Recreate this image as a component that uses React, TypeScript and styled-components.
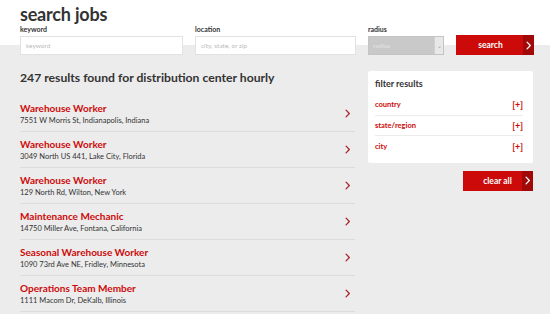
import React from "react";
import styled, { createGlobalStyle } from "styled-components";

const Global = createGlobalStyle`
  html, body { margin: 0; padding: 0; }
  body { background: #ececec; font-family: Lato, "Liberation Sans", sans-serif; color: #333; }
  * { box-sizing: border-box; }
`;

const RED = "#cc0a0a";
const DARK = "#a10808";

const Top = styled.header`
  background: linear-gradient(#ffffff 45px, #ececec 45px);
  padding: 3px 17px 0 20px;
`;

const Title = styled.h1`
  margin: 0;
  font-size: 18px;
  line-height: 22px;
  font-weight: 700;
  color: #333;
  letter-spacing: -0.2px;
`;

const Form = styled.div`
  display: grid;
  grid-template-columns: 163px 161px 76px 78px;
  column-gap: 12px;
  align-items: end;
  margin-top: 0;
`;

const Field = styled.label`
  display: flex;
  flex-direction: column;
`;

const Label = styled.span`
  font-size: 7px;
  font-weight: 700;
  line-height: 9px;
  color: #333;
  margin-bottom: 2px;
`;

const Input = styled.div`
  height: 19px;
  background: #fff;
  border: 1px solid #e2e2e2;
  font-size: 6.5px;
  color: #bbb;
  padding: 0 5px;
  display: flex;
  align-items: center;
`;

const Select = styled.div`
  height: 19px;
  background: #c9c9c9;
  border: 1px solid #c4c4c4;
  display: flex;
  align-items: stretch;
  font-size: 6.5px;
  color: #e4e4e4;
`;

const SelectText = styled.span`
  flex: 1;
  display: flex;
  align-items: center;
  padding: 0 4px;
`;

const SelectArrow = styled.span`
  width: 9px;
  background: #e8e8e8;
  border-left: 1px solid #d0d0d0;
  color: #999;
  font-size: 6px;
  display: flex;
  align-items: center;
  justify-content: center;
`;

const RedButton = styled.button<{ $w: number }>`
  width: ${(p) => p.$w}px;
  height: 20px;
  border: 0;
  padding: 0;
  margin: 0;
  background: ${RED};
  color: #fff;
  font-family: inherit;
  font-size: 8.5px;
  font-weight: 700;
  display: flex;
  align-items: stretch;
  cursor: pointer;
`;

const BtnText = styled.span<{ $pl: number }>`
  flex: 1;
  display: flex;
  align-items: center;
  justify-content: center;
  padding-left: ${(p) => p.$pl}px;
`;

const BtnArrow = styled.span`
  width: 11px;
  background: ${DARK};
  display: flex;
  align-items: center;
  justify-content: center;
`;

const Main = styled.main`
  display: grid;
  grid-template-columns: 335px 165px;
  column-gap: 13px;
  padding: 16px 0 0 20px;
  align-items: start;
`;

const Heading = styled.h2`
  margin: 0;
  font-size: 12.2px;
  line-height: 13px;
  font-weight: 700;
  color: #333;
`;

const List = styled.ul`
  list-style: none;
  margin: 12px 0 0;
  padding: 0;
`;

const Row = styled.li`
  height: 36px;
  border-bottom: 1px solid #dcdcdc;
  display: flex;
  align-items: center;
  justify-content: space-between;
  padding-right: 5px;
`;

const JobText = styled.div`
  display: flex;
  flex-direction: column;
`;

const JobTitle = styled.span`
  font-size: 10px;
  font-weight: 700;
  color: ${RED};
  line-height: 13px;
`;

const JobAddr = styled.span`
  font-size: 7.5px;
  color: #333;
  line-height: 11px;
`;

const Side = styled.aside`
  display: flex;
  flex-direction: column;
  align-items: flex-end;
`;

const Panel = styled.section`
  width: 165px;
  background: #fff;
  border-radius: 2px;
  padding: 7px 10px 6px 7px;
`;

const PanelTitle = styled.h3`
  margin: 0 0 5px;
  font-size: 9px;
  line-height: 12px;
  font-weight: 700;
  color: #333;
`;

const FilterRow = styled.div<{ $last?: boolean }>`
  display: flex;
  justify-content: space-between;
  align-items: center;
  height: 20.5px;
  border-bottom: ${(p) => (p.$last ? "0" : "1px solid #ececec")};
  font-size: 7.5px;
  font-weight: 700;
  color: ${RED};
`;

const Plus = styled.span`
  font-size: 9px;
  font-weight: 700;
`;

const ClearWrap = styled.div`
  margin-top: 8px;
`;

const Chevron = ({ color, size }: { color: string; size: number }) => (
  <svg width={size * 0.6} height={size} viewBox="0 0 6 10" fill="none">
    <path d="M1.2 1.2 L4.8 5 L1.2 8.8" stroke={color} strokeWidth="1.4" strokeLinecap="round" strokeLinejoin="round" />
  </svg>
);

const jobs = [
  ["Warehouse Worker", "7551 W Morris St, Indianapolis, Indiana"],
  ["Warehouse Worker", "3049 North US 441, Lake City, Florida"],
  ["Warehouse Worker", "129 North Rd, Wilton, New York"],
  ["Maintenance Mechanic", "14750 Miller Ave, Fontana, California"],
  ["Seasonal Warehouse Worker", "1090 73rd Ave NE, Fridley, Minnesota"],
  ["Operations Team Member", "1111 Macom Dr, DeKalb, Illinois"],
];

const filters = ["country", "state/region", "city"];

export default function App() {
  return (
    <>
      <Global />
      <Top>
        <Title>search jobs</Title>
        <Form>
          <Field>
            <Label>keyword</Label>
            <Input>keyword</Input>
          </Field>
          <Field>
            <Label>location</Label>
            <Input>city, state, or zip</Input>
          </Field>
          <Field>
            <Label>radius</Label>
            <Select>
              <SelectText>radius</SelectText>
              <SelectArrow>⌄</SelectArrow>
            </Select>
          </Field>
          <RedButton $w={78}>
            <BtnText $pl={2}>search</BtnText>
            <BtnArrow>
              <Chevron color="#fff" size={9} />
            </BtnArrow>
          </RedButton>
        </Form>
      </Top>
      <Main>
        <section>
          <Heading>247 results found for distribution center hourly</Heading>
          <List>
            {jobs.map(([t, a], i) => (
              <Row key={i}>
                <JobText>
                  <JobTitle>{t}</JobTitle>
                  <JobAddr>{a}</JobAddr>
                </JobText>
                <Chevron color="#a8242c" size={9} />
              </Row>
            ))}
          </List>
        </section>
        <Side>
          <Panel>
            <PanelTitle>filter results</PanelTitle>
            {filters.map((f, i) => (
              <FilterRow key={f} $last={i === filters.length - 1}>
                <span>{f}</span>
                <Plus>[+]</Plus>
              </FilterRow>
            ))}
          </Panel>
          <ClearWrap>
            <RedButton $w={70}>
              <BtnText $pl={10}>clear all</BtnText>
              <BtnArrow>
                <Chevron color="#fff" size={9} />
              </BtnArrow>
            </RedButton>
          </ClearWrap>
        </Side>
      </Main>
    </>
  );
}
